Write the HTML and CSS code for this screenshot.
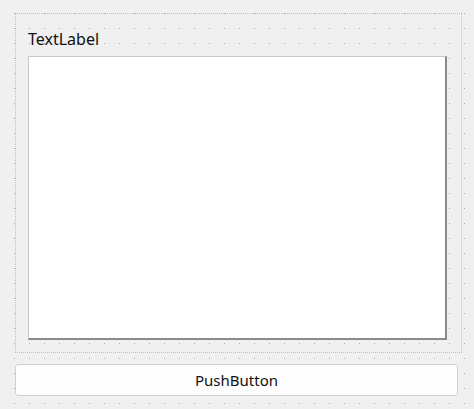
FILE: index.html
```html
<!DOCTYPE html>
<html>
<head>
<meta charset="utf-8">
<link rel="stylesheet" href="styles.css">
</head>
<body>
<div class="form">
  <div class="frame">
    <div class="label">TextLabel</div>
    <div class="edit"></div>
  </div>
  <div class="btnrow">
    <button class="btn">PushButton</button>
  </div>
</div>
</body>
</html>
```
FILE: styles.css
```css
html, body {
  margin: 0;
  padding: 0;
  background: #f0f0f0;
}
.form {
  width: 474px;
  height: 409px;
  box-sizing: border-box;
  background-color: #f0f0f0;
  background-image: radial-gradient(circle at 0.5px 0.5px, #a8a8a8 0.6px, transparent 0.8px);
  background-size: 15px 15px;
  background-position: 14px 13px;
  padding: 13px 12px 0 15px;
  display: flex;
  flex-direction: column;
  font-family: "Noto Sans", "Open Sans", sans-serif;
  color: #000;
}
.frame {
  height: 340px;
  box-sizing: border-box;
  border: 1px dotted #c0c0c0;
  padding: 16px 14px 12px 12px;
  display: flex;
  flex-direction: column;
}
.label {
  font-size: 16px;
  line-height: 18px;
  height: 18px;
  margin-bottom: 8px;
  color: #111;
}
.edit {
  flex: 1;
  background: #fff;
  border-top: 1px solid #c8c8c8;
  border-left: 1px solid #c8c8c8;
  border-right: 2px solid #8a8a8a;
  border-bottom: 2px solid #8a8a8a;
}
.btnrow {
  padding: 11px 4px 0 0;
}
.btn {
  display: block;
  width: 443px;
  height: 32px;
  box-sizing: border-box;
  background: #fdfdfd;
  border: 1px solid #d0d0d0;
  border-radius: 3px;
  font-family: "Noto Sans", "Open Sans", sans-serif;
  font-size: 15px;
  color: #111;
  padding: 0;
}
```
